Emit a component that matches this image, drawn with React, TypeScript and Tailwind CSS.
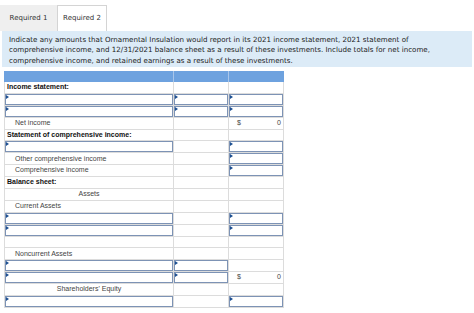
import React from 'react';

type Cell = 'input' | 'empty' | 'total';

interface Line {
  label?: string;
  style?: 'bold' | 'indent' | 'center';
  cols: [Cell, Cell, Cell];
}

const lines: Line[] = [
  { label: 'Income statement:', style: 'bold', cols: ['empty', 'empty', 'empty'] },
  { cols: ['input', 'input', 'input'] },
  { cols: ['input', 'input', 'input'] },
  { label: 'Net income', style: 'indent', cols: ['empty', 'empty', 'total'] },
  { label: 'Statement of comprehensive income:', style: 'bold', cols: ['empty', 'empty', 'empty'] },
  { cols: ['input', 'empty', 'input'] },
  { label: 'Other comprehensive income', style: 'indent', cols: ['empty', 'empty', 'input'] },
  { label: 'Comprehensive income', style: 'indent', cols: ['empty', 'empty', 'input'] },
  { label: 'Balance sheet:', style: 'bold', cols: ['empty', 'empty', 'empty'] },
  { label: 'Assets', style: 'center', cols: ['empty', 'empty', 'empty'] },
  { label: 'Current Assets', style: 'indent', cols: ['empty', 'empty', 'empty'] },
  { cols: ['input', 'empty', 'input'] },
  { cols: ['input', 'empty', 'input'] },
  { cols: ['empty', 'empty', 'empty'] },
  { label: 'Noncurrent Assets', style: 'indent', cols: ['empty', 'empty', 'empty'] },
  { cols: ['input', 'input', 'empty'] },
  { cols: ['input', 'input', 'total'] },
  { label: "Shareholders' Equity", style: 'center', cols: ['empty', 'empty', 'empty'] },
  { cols: ['input', 'empty', 'input'] },
];

const InputBox: React.FC = () => (
  <div className="relative h-full w-full border border-[#7d93b5] bg-white">
    <span className="absolute left-0 top-0 h-0 w-0 border-y-[2px] border-l-[3px] border-y-transparent border-l-[#1d4f91]" />
  </div>
);

const renderCell = (cell: Cell, label?: string, style?: Line['style']) => {
  if (cell === 'input') return <InputBox />;
  if (cell === 'total') {
    return (
      <div className="flex h-full items-center justify-between pl-[8px] pr-[2px]">
        <span>$</span>
        <span>0</span>
      </div>
    );
  }
  if (!label) return null;
  const cls =
    style === 'bold'
      ? 'pl-[2px] font-bold text-[#111]'
      : style === 'center'
        ? 'justify-center'
        : 'pl-[10px]';
  return <div className={`flex h-full items-center ${cls}`}>{label}</div>;
};

const App: React.FC = () => {
  return (
    <div className="h-[313px] w-[474px] overflow-hidden bg-white">
      {/* tabs */}
      <div className="flex h-[31px] items-end pt-[5px] font-['DejaVu_Sans',sans-serif] text-[7px] text-[#333]">
        <div className="flex h-full w-[57px] items-center justify-center bg-[#efefef]">Required 1</div>
        <div className="flex h-full w-[50px] items-center justify-center border-x border-t border-[#d4d4d4] bg-white">
          Required 2
        </div>
      </div>

      {/* instructions */}
      <div className="mx-[2px] h-[36px] bg-[#dcebf7] px-[7px] pt-[4px] font-['DejaVu_Sans',sans-serif] text-[7.1px] leading-[10.4px] text-[#222]">
        Indicate any amounts that Ornamental Insulation would report in its 2021 income statement, 2021 statement of
        comprehensive income, and 12/31/2021 balance sheet as a result of these investments. Include totals for net income,
        comprehensive income, and retained earnings as a result of these investments.
      </div>

      {/* table */}
      <div className="ml-[4px] mt-[4px] w-[280px] font-['Liberation_Sans',Arial,sans-serif] text-[7px] text-[#444]">
        <div className="grid h-[11px] grid-cols-[170px_55px_55px] bg-[#6ea2df]">
          <div className="border-r border-[#a9c6ea]" />
          <div className="border-r border-[#a9c6ea]" />
          <div />
        </div>
        {lines.map((line, i) => (
          <div key={i} className="grid h-[11.9px] grid-cols-[170px_55px_55px] border-b border-[#dcdcdc]">
            <div className="border-r border-l border-[#dcdcdc]">{renderCell(line.cols[0], line.label, line.style)}</div>
            <div className="border-r border-[#dcdcdc]">{renderCell(line.cols[1])}</div>
            <div className="border-r border-[#dcdcdc]">{renderCell(line.cols[2])}</div>
          </div>
        ))}
      </div>
    </div>
  );
};

export default App;
